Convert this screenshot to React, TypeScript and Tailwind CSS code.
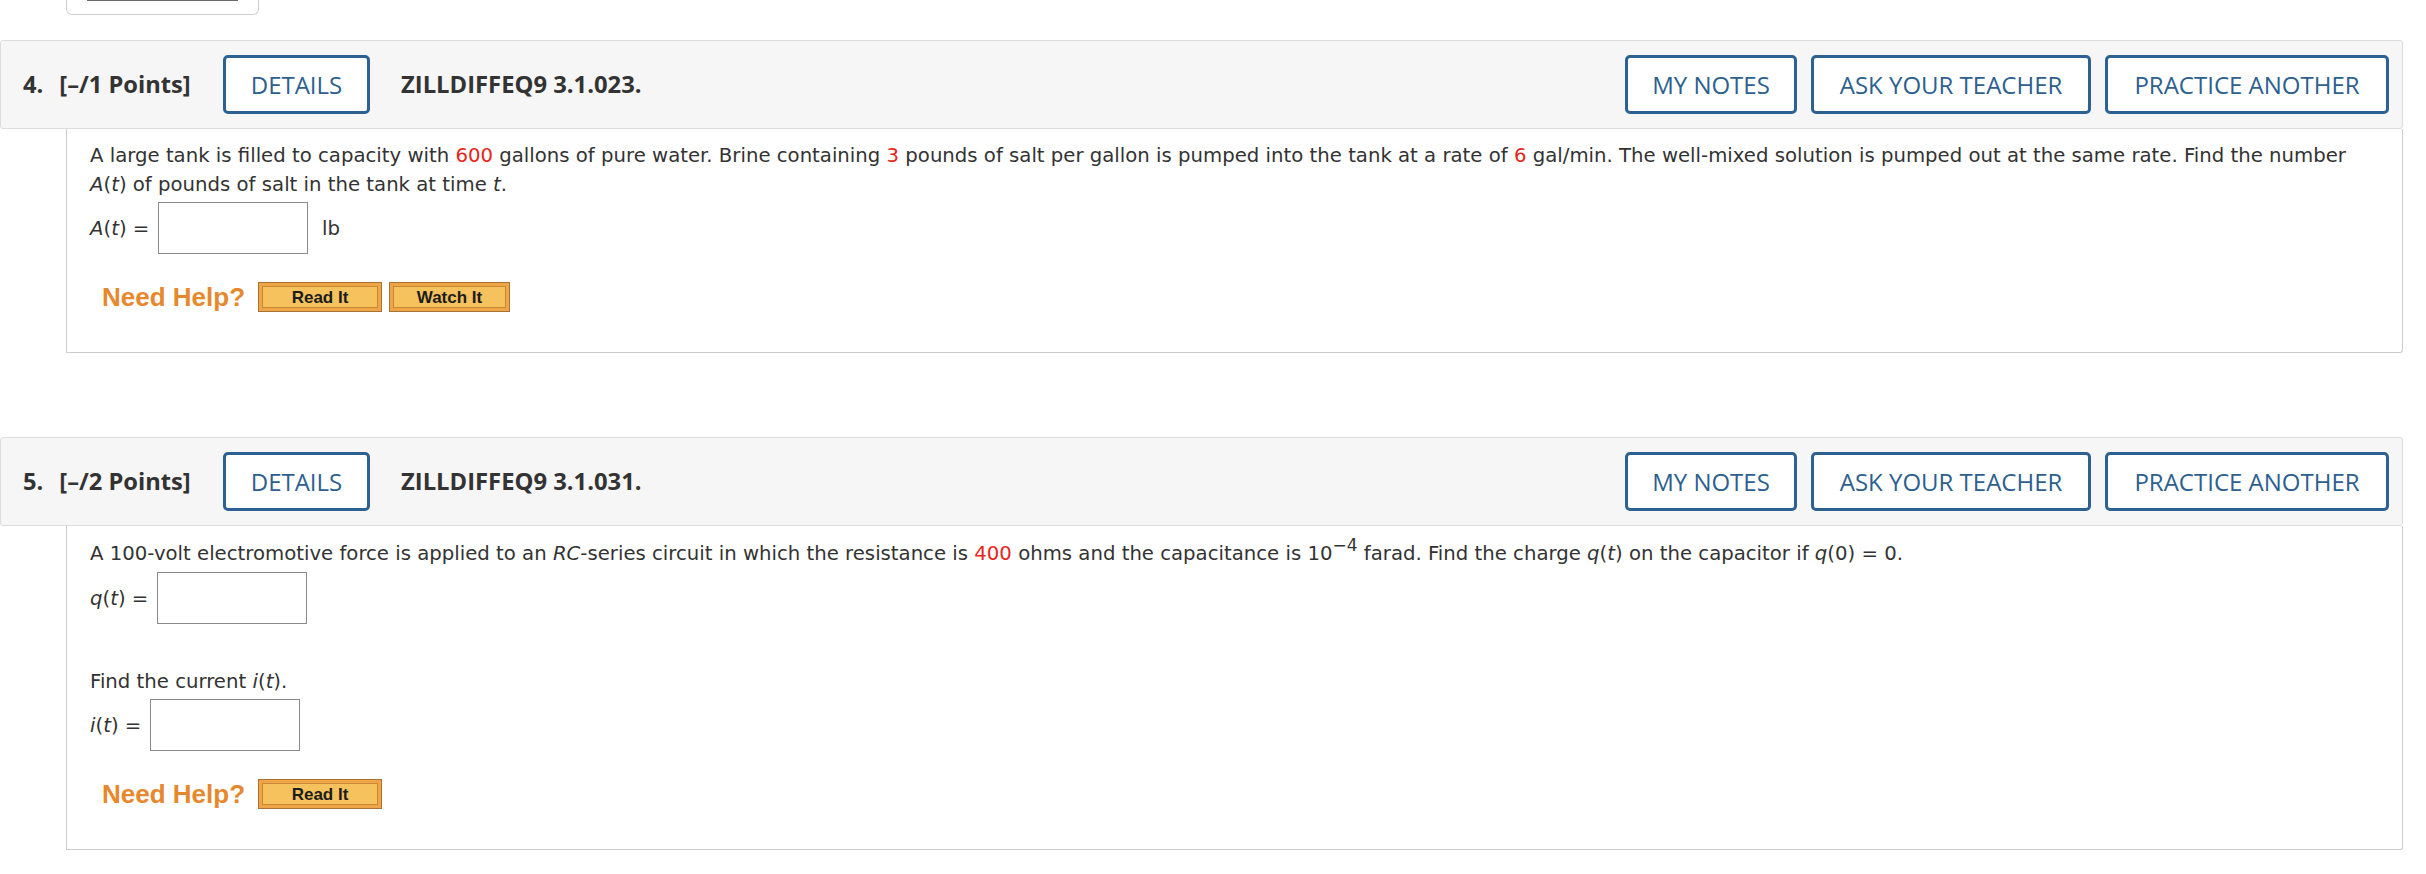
import React from "react";

// Shared bits for the two WebAssign questions
function HeaderButton({ label, className }: { label: string; className: string }) {
  return (
    <div
      className={
        "flex h-[59px] items-center justify-center rounded-[5px] border-[3px] border-[#2d6192] bg-white text-[24px] text-[#2d5f8f] " +
        className
      }
    >
      {label}
    </div>
  );
}

function QuestionHeader({ num, points, code }: { num: string; points: string; code: string }) {
  return (
    <div className="flex h-[89px] items-center rounded-[3px] border border-[#dcdcdc] bg-[#f6f6f6] pl-[22px] pr-[13px] [font-family:'Open_Sans',sans-serif] text-[#333]">
      <div className="flex w-[200px] items-center text-[23.7px] font-bold">
        <span>{num}</span>
        <span className="ml-[16px]">{points}</span>
      </div>
      <HeaderButton label="DETAILS" className="w-[147px]" />
      <span className="ml-[31px] text-[23.8px] font-bold">{code}</span>
      <div className="ml-auto flex gap-[14px]">
        <HeaderButton label="MY NOTES" className="w-[172px]" />
        <HeaderButton label="ASK YOUR TEACHER" className="w-[280px]" />
        <HeaderButton label="PRACTICE ANOTHER" className="w-[284px]" />
      </div>
    </div>
  );
}

function AnswerBox() {
  return <div className="h-[52px] w-[150px] border border-[#8a8a8a] bg-white" />;
}

function HelpButton({ label, className }: { label: string; className: string }) {
  return (
    <div className={"h-[30px] border border-[#a8733a] bg-[#efa446] p-[3px] " + className}>
      <div className="flex h-full w-full items-center justify-center border border-[#c98838] bg-[#f5c25e] [font-family:'Liberation_Sans',Arial,sans-serif] text-[17px] font-bold text-[#1c1c1c]">
        {label}
      </div>
    </div>
  );
}

function NeedHelp({ watch }: { watch?: boolean }) {
  return (
    <div className="flex items-center">
      <span className="ml-[12px] w-[156px] [font-family:'Liberation_Sans',Arial,sans-serif] text-[26px] font-bold text-[#e6882d]">
        Need Help?
      </span>
      <HelpButton label="Read It" className="w-[124px]" />
      {watch && <HelpButton label="Watch It" className="ml-[7px] w-[121px]" />}
    </div>
  );
}

const red = "text-[#e5261b]";

export default function App() {
  return (
    <div className="min-h-screen w-full bg-white text-[#333]">
      {/* tail of the previous block */}
      <div className="ml-[66px] h-[15px] w-[193px] rounded-b-[6px] border-x border-b border-[#cfcfcf]">
        <div className="ml-[20px] h-px w-[151px] bg-[#6a6a6a]" />
      </div>

      <div className="w-[2403px]">
        {/* Question 4 */}
        <div className="mt-[25px]">
          <QuestionHeader num="4." points="[–/1 Points]" code="ZILLDIFFEQ9 3.1.023." />
          <div className="ml-[66px] rounded-br-[3px] border-x border-b border-[#cccccc] pb-[40px] pl-[23px] pt-[12px] [font-family:'DejaVu_Sans',Verdana,sans-serif] text-[19.7px] leading-[29px]">
            <p className="whitespace-nowrap">
              A large tank is filled to capacity with <span className={red}>600</span> gallons of pure water. Brine
              containing <span className={red}>3</span> pounds of salt per gallon is pumped into the tank at a rate of{" "}
              <span className={red}>6</span> gal/min. The well-mixed solution is pumped out at the same rate. Find the
              number
              <br />
              <i>A</i>(<i>t</i>) of pounds of salt in the tank at time <i>t</i>.
            </p>
            <div className="mt-[3px] flex items-center">
              <span className="w-[68px]">
                <i>A</i>(<i>t</i>) =
              </span>
              <AnswerBox />
              <span className="ml-[14px]">lb</span>
            </div>
            <div className="mt-[28px]">
              <NeedHelp watch />
            </div>
          </div>
        </div>

        {/* Question 5 */}
        <div className="mt-[84px]">
          <QuestionHeader num="5." points="[–/2 Points]" code="ZILLDIFFEQ9 3.1.031." />
          <div className="ml-[66px] rounded-br-[3px] border-x border-b border-[#cccccc] pb-[40px] pl-[23px] pt-[13px] [font-family:'DejaVu_Sans',Verdana,sans-serif] text-[19.7px] leading-[29px]">
            <p className="whitespace-nowrap">
              A 100-volt electromotive force is applied to an <i>RC</i>-series circuit in which the resistance is{" "}
              <span className={red}>400</span> ohms and the capacitance is 10
              <span className="relative -top-[9px] text-[17px]">−4</span> farad. Find the charge <i>q</i>(<i>t</i>) on
              the capacitor if <i>q</i>(0) = 0.
            </p>
            <div className="mt-[3px] flex items-center">
              <span className="w-[67px]">
                <i>q</i>(<i>t</i>) =
              </span>
              <AnswerBox />
            </div>
            <p className="mt-[43px]">
              Find the current <i>i</i>(<i>t</i>).
            </p>
            <div className="mt-[3px] flex items-center">
              <span className="w-[60px]">
                <i>i</i>(<i>t</i>) =
              </span>
              <AnswerBox />
            </div>
            <div className="mt-[28px]">
              <NeedHelp />
            </div>
          </div>
        </div>
      </div>
    </div>
  );
}
